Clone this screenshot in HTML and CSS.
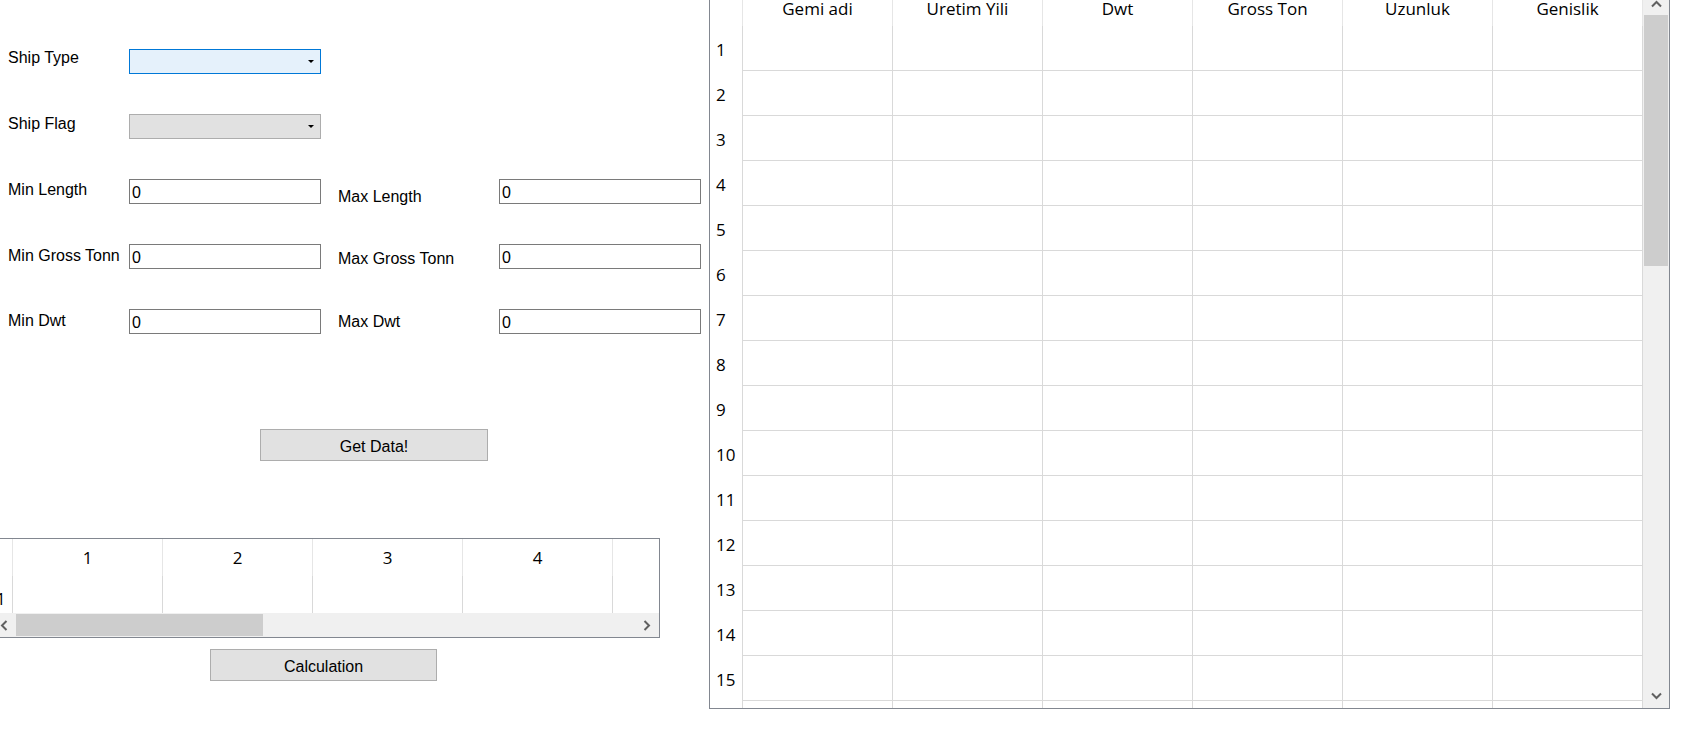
FILE: index.html
```html
<!DOCTYPE html>
<html lang="tr">
<head>
<meta charset="utf-8">
<title>Ship Data</title>
<link rel="stylesheet" href="styles.css">
</head>
<body>
<div class="app">
  <section class="form-panel">
    <div class="form-rows">
      <div class="field-row">
        <span class="lbl">Ship Type</span>
        <div class="combo combo-focus"><span class="caret"></span></div>
      </div>
      <div class="field-row">
        <span class="lbl mt1">Ship Flag</span>
        <div class="combo"><span class="caret"></span></div>
      </div>
      <div class="field-row">
        <span class="lbl mt2">Min Length</span>
        <input class="txt" type="text" value="0">
        <span class="lbl lbl-max mt9">Max Length</span>
        <input class="txt txt-max mt1" type="text" value="0">
      </div>
      <div class="field-row">
        <span class="lbl mt3">Min Gross Tonn</span>
        <input class="txt" type="text" value="0">
        <span class="lbl lbl-max mt6">Max Gross Tonn</span>
        <input class="txt txt-max mt2" type="text" value="0">
      </div>
      <div class="field-row">
        <span class="lbl mt3">Min Dwt</span>
        <input class="txt" type="text" value="0">
        <span class="lbl lbl-max mt4">Max Dwt</span>
        <input class="txt txt-max mt2" type="text" value="0">
      </div>
    </div>

    <button class="btn btn-get" type="button">Get Data!</button>

    <div class="mini-grid">
      <div class="mini-cells">
        <div class="mini-head">
          <div class="mini-corner"></div>
          <div class="mhc">1</div><div class="mhc">2</div><div class="mhc">3</div><div class="mhc">4</div><div class="mhc"></div>
        </div>
        <div class="mini-row">
          <div class="mrh">1</div>
          <div class="mc"></div><div class="mc"></div><div class="mc"></div><div class="mc"></div><div class="mc"></div>
        </div>
      </div>
      <div class="hscroll">
        <span class="hbtn"><svg width="8" height="11" viewBox="0 0 8 11"><polyline points="6.5,1 2,5.5 6.5,10" class="chev"/></svg></span>
        <span class="hthumb"></span>
        <span class="htrack"></span>
        <span class="hbtn"><svg width="8" height="11" viewBox="0 0 8 11"><polyline points="1.5,1 6,5.5 1.5,10" class="chev"/></svg></span>
      </div>
    </div>

    <button class="btn btn-calc" type="button">Calculation</button>
  </section>

  <section class="data-grid">
    <div class="grid-cells">
      <div class="grid-head">
        <div class="corner"></div>
        <div class="hc">Gemi adi</div>
        <div class="hc">Uretim Yili</div>
        <div class="hc">Dwt</div>
        <div class="hc">Gross Ton</div>
        <div class="hc">Uzunluk</div>
        <div class="hc">Genislik</div>
      </div>
      <div class="grid-row"><div class="rh">1</div><div class="c"></div><div class="c"></div><div class="c"></div><div class="c"></div><div class="c"></div><div class="c"></div></div>
      <div class="grid-row"><div class="rh">2</div><div class="c"></div><div class="c"></div><div class="c"></div><div class="c"></div><div class="c"></div><div class="c"></div></div>
      <div class="grid-row"><div class="rh">3</div><div class="c"></div><div class="c"></div><div class="c"></div><div class="c"></div><div class="c"></div><div class="c"></div></div>
      <div class="grid-row"><div class="rh">4</div><div class="c"></div><div class="c"></div><div class="c"></div><div class="c"></div><div class="c"></div><div class="c"></div></div>
      <div class="grid-row"><div class="rh">5</div><div class="c"></div><div class="c"></div><div class="c"></div><div class="c"></div><div class="c"></div><div class="c"></div></div>
      <div class="grid-row"><div class="rh">6</div><div class="c"></div><div class="c"></div><div class="c"></div><div class="c"></div><div class="c"></div><div class="c"></div></div>
      <div class="grid-row"><div class="rh">7</div><div class="c"></div><div class="c"></div><div class="c"></div><div class="c"></div><div class="c"></div><div class="c"></div></div>
      <div class="grid-row"><div class="rh">8</div><div class="c"></div><div class="c"></div><div class="c"></div><div class="c"></div><div class="c"></div><div class="c"></div></div>
      <div class="grid-row"><div class="rh">9</div><div class="c"></div><div class="c"></div><div class="c"></div><div class="c"></div><div class="c"></div><div class="c"></div></div>
      <div class="grid-row"><div class="rh">10</div><div class="c"></div><div class="c"></div><div class="c"></div><div class="c"></div><div class="c"></div><div class="c"></div></div>
      <div class="grid-row"><div class="rh">11</div><div class="c"></div><div class="c"></div><div class="c"></div><div class="c"></div><div class="c"></div><div class="c"></div></div>
      <div class="grid-row"><div class="rh">12</div><div class="c"></div><div class="c"></div><div class="c"></div><div class="c"></div><div class="c"></div><div class="c"></div></div>
      <div class="grid-row"><div class="rh">13</div><div class="c"></div><div class="c"></div><div class="c"></div><div class="c"></div><div class="c"></div><div class="c"></div></div>
      <div class="grid-row"><div class="rh">14</div><div class="c"></div><div class="c"></div><div class="c"></div><div class="c"></div><div class="c"></div><div class="c"></div></div>
      <div class="grid-row"><div class="rh">15</div><div class="c"></div><div class="c"></div><div class="c"></div><div class="c"></div><div class="c"></div><div class="c"></div></div>
      <div class="grid-row"><div class="rh"></div><div class="c"></div><div class="c"></div><div class="c"></div><div class="c"></div><div class="c"></div><div class="c"></div></div>
    </div>
    <div class="vscroll">
      <span class="sb-up"><svg width="11" height="8" viewBox="0 0 11 8"><polyline points="1,6.5 5.5,2 10,6.5" class="chev"/></svg></span>
      <span class="vthumb"></span>
      <span class="vtrack"></span>
      <span class="sb-down"><svg width="11" height="8" viewBox="0 0 11 8"><polyline points="1,1.5 5.5,6 10,1.5" class="chev"/></svg></span>
    </div>
  </section>
</div>
</body>
</html>
```

FILE: styles.css
```css
* { box-sizing: border-box; }

html, body {
  margin: 0;
  padding: 0;
  background: #ffffff;
}

body {
  font-family: "Liberation Sans", Arial, sans-serif;
  font-size: 16px;
  color: #000;
  height: 748px;
  overflow: hidden;
}

.app {
  display: flex;
  align-items: flex-start;
}

/* ---------- left form panel ---------- */
.form-panel {
  flex: none;
  width: 709px;
  display: flex;
  flex-direction: column;
  align-items: flex-start;
  padding-top: 49px;
}

.form-rows {
  display: flex;
  flex-direction: column;
  gap: 40px;
}

.field-row {
  display: grid;
  grid-template-columns: 129px 192px 17px 161px 202px;
  height: 25px;
  align-items: start;
}

.lbl {
  display: block;
  line-height: 18px;
  padding-left: 8px;
  white-space: nowrap;
}

.lbl-max {
  grid-column: 4;
  padding-left: 0;
}

.mt1 { margin-top: 1px; }
.mt2 { margin-top: 2px; }
.mt3 { margin-top: 3px; }
.mt4 { margin-top: 4px; }
.mt6 { margin-top: 6px; }
.mt9 { margin-top: 9px; }

.combo {
  width: 192px;
  height: 25px;
  border: 1px solid #adadad;
  background: #e1e1e1;
  display: flex;
  align-items: center;
  justify-content: flex-end;
  padding-right: 6px;
}

.combo-focus {
  border-color: #0078d7;
  background: #e5f1fb;
}

.caret {
  width: 0;
  height: 0;
  border-left: 3px solid transparent;
  border-right: 3px solid transparent;
  border-top: 3px solid #000;
}

.txt {
  width: 192px;
  height: 25px;
  margin: 0;
  border: 1px solid #7a7a7a;
  padding: 3px 0 0 2px;
  background: #fff;
  color: #000;
  font: inherit;
  outline: none;
}

.txt-max {
  grid-column: 5;
  width: 202px;
}

.btn {
  font: inherit;
  color: #000;
  background: #e1e1e1;
  border: 1px solid #adadad;
  height: 32px;
  padding: 3px 0 0;
  margin: 0;
}

.btn-get {
  width: 228px;
  margin: 95px 0 0 260px;
}

.btn-calc {
  width: 227px;
  margin: 11px 0 0 210px;
}

/* ---------- small grid ---------- */
.mini-grid {
  width: 670px;
  height: 100px;
  margin: 77px 0 0 -10px;
  border: 1px solid #828790;
  display: flex;
  flex-direction: column;
}

.mini-cells {
  height: 74px;
  overflow: hidden;
  font-family: "Open Sans", "Noto Sans", sans-serif;
  font-size: 17px;
  line-height: 20px;
}

.mini-head,
.mini-row {
  display: grid;
  grid-template-columns: 21px repeat(5, 150px);
  height: 37px;
}

.mhc {
  border-left: 1px solid #e6e6e6;
  text-align: center;
  padding-top: 9px;
}

.mc {
  border-left: 1px solid #d9d9d9;
}

.mrh {
  padding: 13px 0 0 5px;
}

.hscroll {
  height: 24px;
  display: flex;
  background: #f0f0f0;
}

.hbtn {
  flex: none;
  width: 25px;
  display: flex;
  align-items: center;
  justify-content: center;
}

.hthumb {
  flex: none;
  width: 247px;
  margin: 1px 0;
  background: #cdcdcd;
}

.htrack { flex: 1; }

.chev {
  fill: none;
  stroke: #606060;
  stroke-width: 2;
}

/* ---------- main data grid ---------- */
.data-grid {
  flex: none;
  width: 961px;
  height: 723px;
  margin-top: -14px;
  border: 1px solid #828790;
  display: flex;
}

.grid-cells {
  flex: none;
  width: 933px;
  height: 721px;
  overflow: hidden;
  font-family: "Open Sans", "Noto Sans", sans-serif;
  font-size: 17px;
  line-height: 20px;
}

.grid-head,
.grid-row {
  display: grid;
  grid-template-columns: 32px repeat(5, 150px) 151px;
}

.grid-head { height: 39px; }
.grid-row { height: 45px; }

.hc {
  border-left: 1px solid #e6e6e6;
  text-align: center;
  padding-top: 13px;
  line-height: 17px;
  white-space: nowrap;
}

.hc:last-child { border-right: 1px solid #e6e6e6; }

.rh {
  padding: 14px 0 0 6px;
}

.c {
  border-left: 1px solid #d9d9d9;
  border-bottom: 1px solid #d9d9d9;
}

.c:last-child { border-right: 1px solid #d9d9d9; }

.vscroll {
  flex: none;
  width: 26px;
  background: #f0f0f0;
  display: flex;
  flex-direction: column;
}

.sb-up {
  flex: none;
  height: 28px;
  display: flex;
  justify-content: center;
  align-items: flex-end;
  padding-bottom: 7px;
}

.vthumb {
  flex: none;
  height: 251px;
  margin: 0 1px;
  background: #cdcdcd;
}

.vtrack { flex: 1; }

.sb-down {
  flex: none;
  height: 25px;
  display: flex;
  justify-content: center;
  align-items: center;
}
```
